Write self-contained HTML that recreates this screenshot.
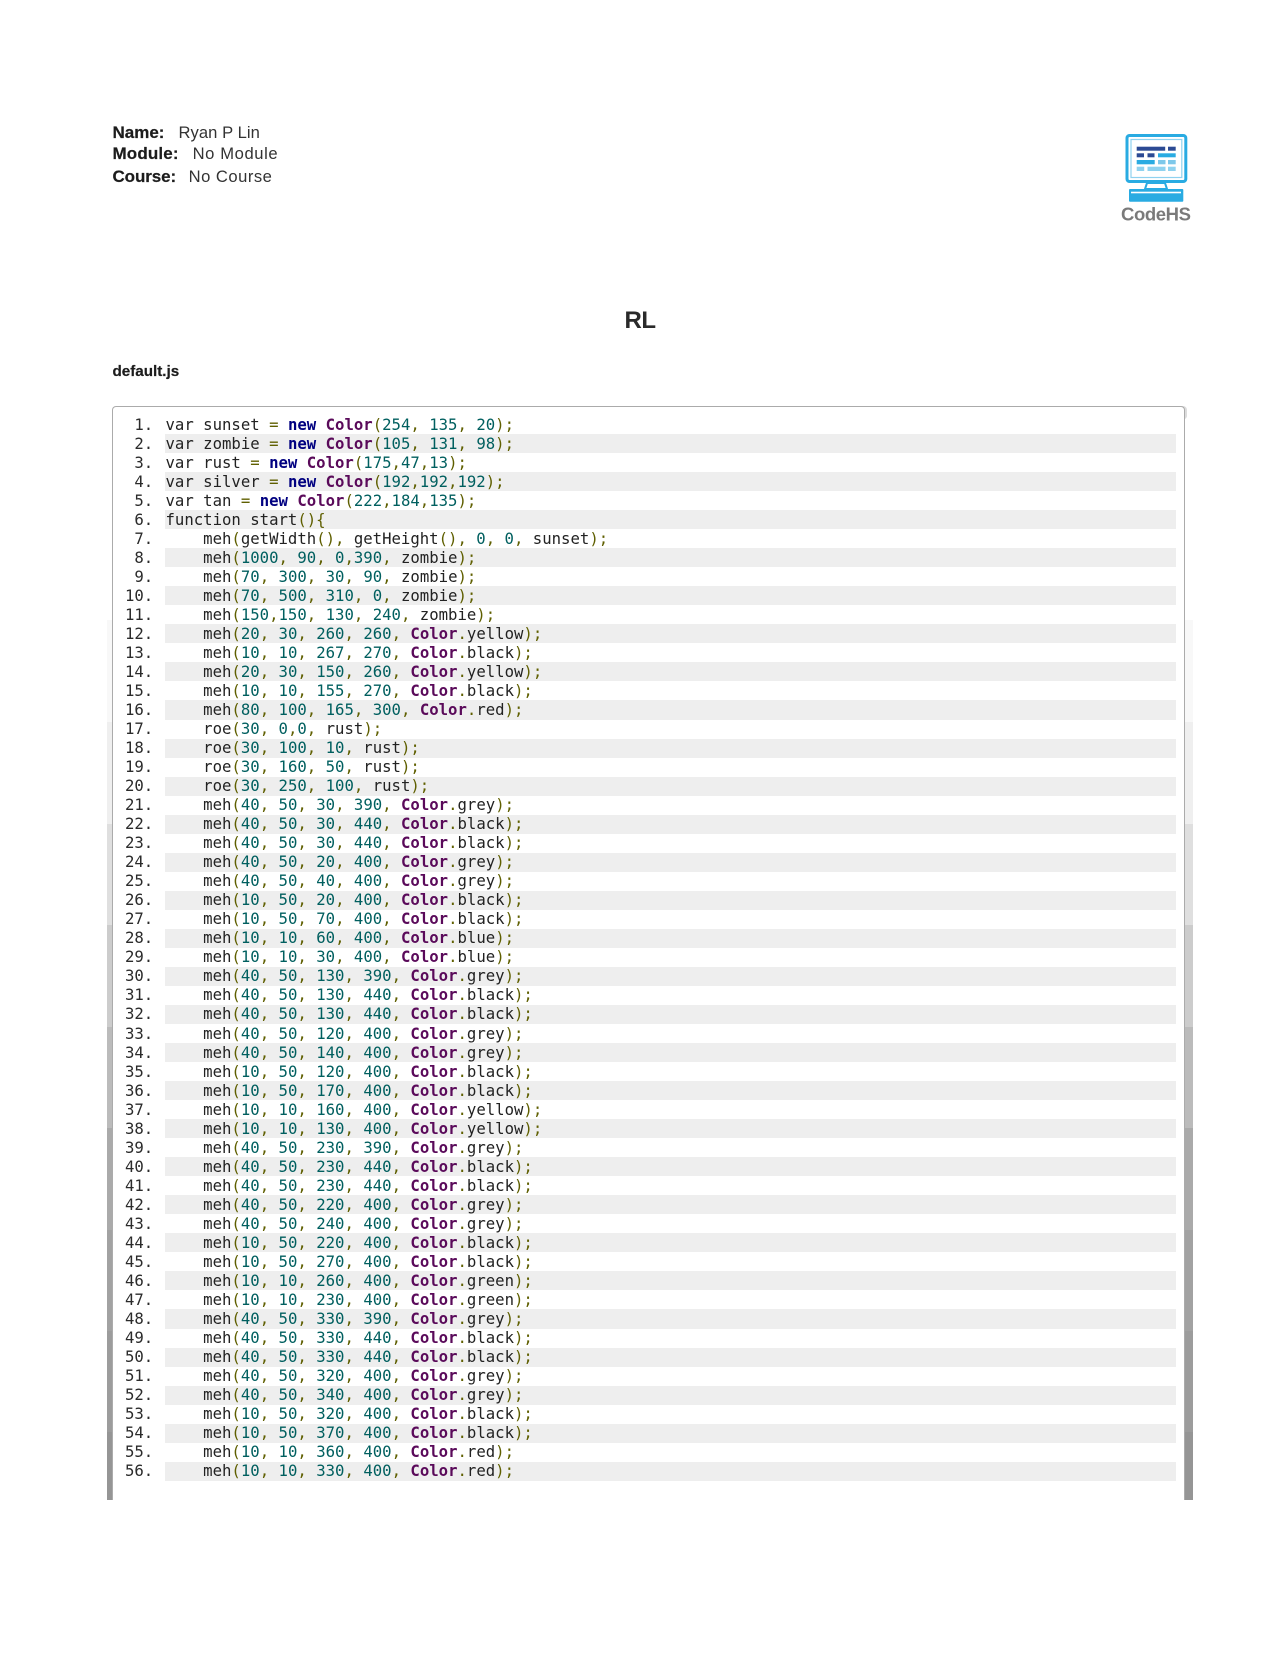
<!DOCTYPE html>
<html><head><meta charset="utf-8"><title>RL</title>
<style>
html,body{margin:0;padding:0;background:#fff;}
body{position:relative;width:1280px;height:1656px;overflow:hidden;font-family:"Liberation Sans",sans-serif;color:#222;}
.a{position:absolute;white-space:nowrap;}
.blur{filter:blur(.38px);position:absolute;left:0;top:0;width:1280px;height:1656px;}
.lb{font-weight:bold;font-size:17px;line-height:22px;color:#1c1c1c;-webkit-text-stroke:.2px #1c1c1c;}
.vl{font-size:16.6px;line-height:22px;color:#333;}
.code{position:absolute;left:0;top:414.5px;width:1280px;font-family:"DejaVu Sans Mono","Liberation Mono",monospace;font-size:15.65px;line-height:19.04px;color:#222;}
.code div{position:relative;height:19.04px;padding-left:165.5px;white-space:pre;}
.code div:nth-child(even)::before{content:"";position:absolute;left:165px;width:1011px;top:.5px;height:19.04px;background:#eee;z-index:-1;}
.code q{quotes:none;position:absolute;left:112px;width:41.2px;text-align:right;color:#2b2b2b;}
.code q::before,.code q::after{content:none;}
.code i{font-style:normal;color:#5f5f00;}
.code em{font-style:normal;color:#005f5f;}
.code b{color:#5a0a5a;}
.code u{text-decoration:none;font-weight:bold;color:#000080;}
.s{position:absolute;}
</style></head><body>
<div class="s" style="left:107px;top:620px;width:5px;height:102px;background:#f8f8f8"></div>
<div class="s" style="left:107px;top:722px;width:5px;height:102px;background:#efefef"></div>
<div class="s" style="left:107px;top:824px;width:5px;height:101px;background:#dfdfdf"></div>
<div class="s" style="left:107px;top:925px;width:5px;height:102px;background:#cccccc"></div>
<div class="s" style="left:107px;top:1027px;width:5px;height:101px;background:#bbbbbb"></div>
<div class="s" style="left:107px;top:1128px;width:5px;height:102px;background:#aaaaaa"></div>
<div class="s" style="left:107px;top:1230px;width:5px;height:101px;background:#a2a2a2"></div>
<div class="s" style="left:107px;top:1331px;width:5px;height:101px;background:#9c9c9c"></div>
<div class="s" style="left:107px;top:1432px;width:5px;height:68px;background:#959595"></div>
<div class="s" style="left:1185px;top:620px;width:8px;height:102px;background:#f8f8f8"></div>
<div class="s" style="left:1185px;top:722px;width:8px;height:102px;background:#efefef"></div>
<div class="s" style="left:1185px;top:824px;width:8px;height:101px;background:#dfdfdf"></div>
<div class="s" style="left:1185px;top:925px;width:8px;height:102px;background:#cccccc"></div>
<div class="s" style="left:1185px;top:1027px;width:8px;height:101px;background:#bbbbbb"></div>
<div class="s" style="left:1185px;top:1128px;width:8px;height:102px;background:#aaaaaa"></div>
<div class="s" style="left:1185px;top:1230px;width:8px;height:101px;background:#a2a2a2"></div>
<div class="s" style="left:1185px;top:1331px;width:8px;height:101px;background:#9c9c9c"></div>
<div class="s" style="left:1185px;top:1432px;width:8px;height:68px;background:#959595"></div>
<div class="s" style="left:1180px;top:406px;width:7px;height:13px;background:#dcdcdc;border-radius:0 4px 3px 0"></div>
<div class="s" style="left:111.5px;top:406px;width:1073px;height:1094px;border:1.6px solid #ababab;border-bottom:0;border-radius:4px 4px 0 0;box-sizing:border-box;background:#fff"></div>
<div class="blur">
<div class="a lb" style="left:112.5px;top:122px">Name:</div><div class="a vl" style="left:178.5px;top:122px;letter-spacing:.05px">Ryan P Lin</div>
<div class="a lb" style="left:112.5px;top:143px;letter-spacing:.15px">Module:</div><div class="a vl" style="left:192.6px;top:143px;letter-spacing:.6px">No Module</div>
<div class="a lb" style="left:112.5px;top:166px;letter-spacing:-.1px">Course:</div><div class="a vl" style="left:188.6px;top:166px;letter-spacing:.5px">No Course</div>
<div class="a" style="left:624.5px;top:306px;font-size:24px;line-height:30px;font-weight:bold;color:#2a2a2a;letter-spacing:-.4px">RL</div>
<div class="a" style="left:112.5px;top:362.500px;font-size:15.2px;line-height:18px;font-weight:bold;color:#1c1c1c;-webkit-text-stroke:.2px #1c1c1c">default.js</div>
<svg class="a" style="left:1100px;top:120px" width="110" height="115" viewBox="0 0 110 115">
<rect x="27" y="15.500" width="58.800" height="46" rx="2.500" fill="#fff" stroke="#29abe2" stroke-width="3"/>
<rect x="31" y="19.500" width="50.800" height="38" fill="#fff" stroke="#8fd2ef" stroke-width="1.200"/>
<rect x="36.700" y="26.700" width="28.500" height="4" fill="#2b4a94"/><rect x="68" y="26.700" width="7.700" height="4" fill="#2b4a94"/>
<rect x="36.700" y="33.300" width="7.300" height="4" fill="#2b4a94"/><rect x="47.500" y="33.300" width="7" height="4" fill="#2b4a94"/><rect x="58" y="33.300" width="17.700" height="4" fill="#29abe2"/>
<rect x="36.700" y="40" width="18" height="4.300" fill="#29abe2"/><rect x="58" y="40" width="7.500" height="4.300" fill="#7dc8ea"/><rect x="68" y="40" width="7.700" height="4.300" fill="#7dc8ea"/>
<rect x="36.700" y="46.700" width="7.500" height="4.300" fill="#8fd2ef"/><rect x="47.500" y="46.700" width="18" height="4.300" fill="#8fd2ef"/><rect x="68" y="46.700" width="7.700" height="4.300" fill="#8fd2ef"/>
<path d="M47 63h18l2 6H45z" fill="#fff" stroke="#29abe2" stroke-width="2"/>
<rect x="29" y="69" width="54.300" height="12.700" rx="1" fill="#29abe2"/>
<rect x="31" y="71.700" width="50" height="1.600" fill="#fff"/>
<text x="56" y="100.500" text-anchor="middle" font-family="Liberation Sans" font-weight="bold" font-size="18.500" fill="#7a7a7a" textLength="70" lengthAdjust="spacing">CodeHS</text>
</svg>
<div class="code">
<div><q>1.</q>var sunset <i>=</i> <u>new</u> <b>Color</b><i>(</i><em>254</em><i>,</i> <em>135</em><i>,</i> <em>20</em><i>);</i></div>
<div><q>2.</q>var zombie <i>=</i> <u>new</u> <b>Color</b><i>(</i><em>105</em><i>,</i> <em>131</em><i>,</i> <em>98</em><i>);</i></div>
<div><q>3.</q>var rust <i>=</i> <u>new</u> <b>Color</b><i>(</i><em>175</em><i>,</i><em>47</em><i>,</i><em>13</em><i>);</i></div>
<div><q>4.</q>var silver <i>=</i> <u>new</u> <b>Color</b><i>(</i><em>192</em><i>,</i><em>192</em><i>,</i><em>192</em><i>);</i></div>
<div><q>5.</q>var tan <i>=</i> <u>new</u> <b>Color</b><i>(</i><em>222</em><i>,</i><em>184</em><i>,</i><em>135</em><i>);</i></div>
<div><q>6.</q>function start<i>(){</i></div>
<div><q>7.</q>    meh<i>(</i>getWidth<i>(),</i> getHeight<i>(),</i> <em>0</em><i>,</i> <em>0</em><i>,</i> sunset<i>);</i></div>
<div><q>8.</q>    meh<i>(</i><em>1000</em><i>,</i> <em>90</em><i>,</i> <em>0</em><i>,</i><em>390</em><i>,</i> zombie<i>);</i></div>
<div><q>9.</q>    meh<i>(</i><em>70</em><i>,</i> <em>300</em><i>,</i> <em>30</em><i>,</i> <em>90</em><i>,</i> zombie<i>);</i></div>
<div><q>10.</q>    meh<i>(</i><em>70</em><i>,</i> <em>500</em><i>,</i> <em>310</em><i>,</i> <em>0</em><i>,</i> zombie<i>);</i></div>
<div><q>11.</q>    meh<i>(</i><em>150</em><i>,</i><em>150</em><i>,</i> <em>130</em><i>,</i> <em>240</em><i>,</i> zombie<i>);</i></div>
<div><q>12.</q>    meh<i>(</i><em>20</em><i>,</i> <em>30</em><i>,</i> <em>260</em><i>,</i> <em>260</em><i>,</i> <b>Color</b><i>.</i>yellow<i>);</i></div>
<div><q>13.</q>    meh<i>(</i><em>10</em><i>,</i> <em>10</em><i>,</i> <em>267</em><i>,</i> <em>270</em><i>,</i> <b>Color</b><i>.</i>black<i>);</i></div>
<div><q>14.</q>    meh<i>(</i><em>20</em><i>,</i> <em>30</em><i>,</i> <em>150</em><i>,</i> <em>260</em><i>,</i> <b>Color</b><i>.</i>yellow<i>);</i></div>
<div><q>15.</q>    meh<i>(</i><em>10</em><i>,</i> <em>10</em><i>,</i> <em>155</em><i>,</i> <em>270</em><i>,</i> <b>Color</b><i>.</i>black<i>);</i></div>
<div><q>16.</q>    meh<i>(</i><em>80</em><i>,</i> <em>100</em><i>,</i> <em>165</em><i>,</i> <em>300</em><i>,</i> <b>Color</b><i>.</i>red<i>);</i></div>
<div><q>17.</q>    roe<i>(</i><em>30</em><i>,</i> <em>0</em><i>,</i><em>0</em><i>,</i> rust<i>);</i></div>
<div><q>18.</q>    roe<i>(</i><em>30</em><i>,</i> <em>100</em><i>,</i> <em>10</em><i>,</i> rust<i>);</i></div>
<div><q>19.</q>    roe<i>(</i><em>30</em><i>,</i> <em>160</em><i>,</i> <em>50</em><i>,</i> rust<i>);</i></div>
<div><q>20.</q>    roe<i>(</i><em>30</em><i>,</i> <em>250</em><i>,</i> <em>100</em><i>,</i> rust<i>);</i></div>
<div><q>21.</q>    meh<i>(</i><em>40</em><i>,</i> <em>50</em><i>,</i> <em>30</em><i>,</i> <em>390</em><i>,</i> <b>Color</b><i>.</i>grey<i>);</i></div>
<div><q>22.</q>    meh<i>(</i><em>40</em><i>,</i> <em>50</em><i>,</i> <em>30</em><i>,</i> <em>440</em><i>,</i> <b>Color</b><i>.</i>black<i>);</i></div>
<div><q>23.</q>    meh<i>(</i><em>40</em><i>,</i> <em>50</em><i>,</i> <em>30</em><i>,</i> <em>440</em><i>,</i> <b>Color</b><i>.</i>black<i>);</i></div>
<div><q>24.</q>    meh<i>(</i><em>40</em><i>,</i> <em>50</em><i>,</i> <em>20</em><i>,</i> <em>400</em><i>,</i> <b>Color</b><i>.</i>grey<i>);</i></div>
<div><q>25.</q>    meh<i>(</i><em>40</em><i>,</i> <em>50</em><i>,</i> <em>40</em><i>,</i> <em>400</em><i>,</i> <b>Color</b><i>.</i>grey<i>);</i></div>
<div><q>26.</q>    meh<i>(</i><em>10</em><i>,</i> <em>50</em><i>,</i> <em>20</em><i>,</i> <em>400</em><i>,</i> <b>Color</b><i>.</i>black<i>);</i></div>
<div><q>27.</q>    meh<i>(</i><em>10</em><i>,</i> <em>50</em><i>,</i> <em>70</em><i>,</i> <em>400</em><i>,</i> <b>Color</b><i>.</i>black<i>);</i></div>
<div><q>28.</q>    meh<i>(</i><em>10</em><i>,</i> <em>10</em><i>,</i> <em>60</em><i>,</i> <em>400</em><i>,</i> <b>Color</b><i>.</i>blue<i>);</i></div>
<div><q>29.</q>    meh<i>(</i><em>10</em><i>,</i> <em>10</em><i>,</i> <em>30</em><i>,</i> <em>400</em><i>,</i> <b>Color</b><i>.</i>blue<i>);</i></div>
<div><q>30.</q>    meh<i>(</i><em>40</em><i>,</i> <em>50</em><i>,</i> <em>130</em><i>,</i> <em>390</em><i>,</i> <b>Color</b><i>.</i>grey<i>);</i></div>
<div><q>31.</q>    meh<i>(</i><em>40</em><i>,</i> <em>50</em><i>,</i> <em>130</em><i>,</i> <em>440</em><i>,</i> <b>Color</b><i>.</i>black<i>);</i></div>
<div><q>32.</q>    meh<i>(</i><em>40</em><i>,</i> <em>50</em><i>,</i> <em>130</em><i>,</i> <em>440</em><i>,</i> <b>Color</b><i>.</i>black<i>);</i></div>
<div><q>33.</q>    meh<i>(</i><em>40</em><i>,</i> <em>50</em><i>,</i> <em>120</em><i>,</i> <em>400</em><i>,</i> <b>Color</b><i>.</i>grey<i>);</i></div>
<div><q>34.</q>    meh<i>(</i><em>40</em><i>,</i> <em>50</em><i>,</i> <em>140</em><i>,</i> <em>400</em><i>,</i> <b>Color</b><i>.</i>grey<i>);</i></div>
<div><q>35.</q>    meh<i>(</i><em>10</em><i>,</i> <em>50</em><i>,</i> <em>120</em><i>,</i> <em>400</em><i>,</i> <b>Color</b><i>.</i>black<i>);</i></div>
<div><q>36.</q>    meh<i>(</i><em>10</em><i>,</i> <em>50</em><i>,</i> <em>170</em><i>,</i> <em>400</em><i>,</i> <b>Color</b><i>.</i>black<i>);</i></div>
<div><q>37.</q>    meh<i>(</i><em>10</em><i>,</i> <em>10</em><i>,</i> <em>160</em><i>,</i> <em>400</em><i>,</i> <b>Color</b><i>.</i>yellow<i>);</i></div>
<div><q>38.</q>    meh<i>(</i><em>10</em><i>,</i> <em>10</em><i>,</i> <em>130</em><i>,</i> <em>400</em><i>,</i> <b>Color</b><i>.</i>yellow<i>);</i></div>
<div><q>39.</q>    meh<i>(</i><em>40</em><i>,</i> <em>50</em><i>,</i> <em>230</em><i>,</i> <em>390</em><i>,</i> <b>Color</b><i>.</i>grey<i>);</i></div>
<div><q>40.</q>    meh<i>(</i><em>40</em><i>,</i> <em>50</em><i>,</i> <em>230</em><i>,</i> <em>440</em><i>,</i> <b>Color</b><i>.</i>black<i>);</i></div>
<div><q>41.</q>    meh<i>(</i><em>40</em><i>,</i> <em>50</em><i>,</i> <em>230</em><i>,</i> <em>440</em><i>,</i> <b>Color</b><i>.</i>black<i>);</i></div>
<div><q>42.</q>    meh<i>(</i><em>40</em><i>,</i> <em>50</em><i>,</i> <em>220</em><i>,</i> <em>400</em><i>,</i> <b>Color</b><i>.</i>grey<i>);</i></div>
<div><q>43.</q>    meh<i>(</i><em>40</em><i>,</i> <em>50</em><i>,</i> <em>240</em><i>,</i> <em>400</em><i>,</i> <b>Color</b><i>.</i>grey<i>);</i></div>
<div><q>44.</q>    meh<i>(</i><em>10</em><i>,</i> <em>50</em><i>,</i> <em>220</em><i>,</i> <em>400</em><i>,</i> <b>Color</b><i>.</i>black<i>);</i></div>
<div><q>45.</q>    meh<i>(</i><em>10</em><i>,</i> <em>50</em><i>,</i> <em>270</em><i>,</i> <em>400</em><i>,</i> <b>Color</b><i>.</i>black<i>);</i></div>
<div><q>46.</q>    meh<i>(</i><em>10</em><i>,</i> <em>10</em><i>,</i> <em>260</em><i>,</i> <em>400</em><i>,</i> <b>Color</b><i>.</i>green<i>);</i></div>
<div><q>47.</q>    meh<i>(</i><em>10</em><i>,</i> <em>10</em><i>,</i> <em>230</em><i>,</i> <em>400</em><i>,</i> <b>Color</b><i>.</i>green<i>);</i></div>
<div><q>48.</q>    meh<i>(</i><em>40</em><i>,</i> <em>50</em><i>,</i> <em>330</em><i>,</i> <em>390</em><i>,</i> <b>Color</b><i>.</i>grey<i>);</i></div>
<div><q>49.</q>    meh<i>(</i><em>40</em><i>,</i> <em>50</em><i>,</i> <em>330</em><i>,</i> <em>440</em><i>,</i> <b>Color</b><i>.</i>black<i>);</i></div>
<div><q>50.</q>    meh<i>(</i><em>40</em><i>,</i> <em>50</em><i>,</i> <em>330</em><i>,</i> <em>440</em><i>,</i> <b>Color</b><i>.</i>black<i>);</i></div>
<div><q>51.</q>    meh<i>(</i><em>40</em><i>,</i> <em>50</em><i>,</i> <em>320</em><i>,</i> <em>400</em><i>,</i> <b>Color</b><i>.</i>grey<i>);</i></div>
<div><q>52.</q>    meh<i>(</i><em>40</em><i>,</i> <em>50</em><i>,</i> <em>340</em><i>,</i> <em>400</em><i>,</i> <b>Color</b><i>.</i>grey<i>);</i></div>
<div><q>53.</q>    meh<i>(</i><em>10</em><i>,</i> <em>50</em><i>,</i> <em>320</em><i>,</i> <em>400</em><i>,</i> <b>Color</b><i>.</i>black<i>);</i></div>
<div><q>54.</q>    meh<i>(</i><em>10</em><i>,</i> <em>50</em><i>,</i> <em>370</em><i>,</i> <em>400</em><i>,</i> <b>Color</b><i>.</i>black<i>);</i></div>
<div><q>55.</q>    meh<i>(</i><em>10</em><i>,</i> <em>10</em><i>,</i> <em>360</em><i>,</i> <em>400</em><i>,</i> <b>Color</b><i>.</i>red<i>);</i></div>
<div><q>56.</q>    meh<i>(</i><em>10</em><i>,</i> <em>10</em><i>,</i> <em>330</em><i>,</i> <em>400</em><i>,</i> <b>Color</b><i>.</i>red<i>);</i></div>
</div>
</div>
</body></html>
